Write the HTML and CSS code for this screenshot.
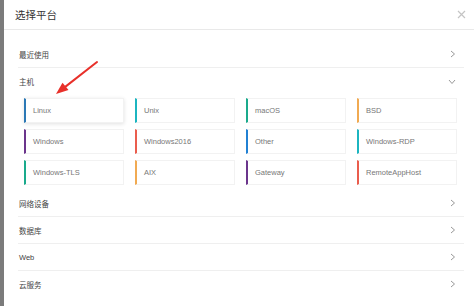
FILE: index.html
```html
<!DOCTYPE html>
<html lang="zh-CN">
<head>
  <meta charset="UTF-8" />
  <title>选择平台</title>
  <link rel="stylesheet" href="styles.css">
</head>
<body>

  <div class="modal">
    <div class="modal-header">
      <span class="modal-title">选择平台</span>
      <svg class="close" width="9" height="9" viewBox="0 0 9 9">
        <path d="M1 1 L8 8 M8 1 L1 8" stroke="#c4c4c4" stroke-width="1.2" fill="none"/>
      </svg>
    </div>

    <div class="modal-body">
      <div class="group">
        <span>最近使用</span>
        <svg class="chev" width="6" height="8" viewBox="0 0 6 8"><path d="M1 1 L4.5 4 L1 7" stroke="#999" stroke-width="1" fill="none"/></svg>
      </div>

      <div class="group open">
        <span>主机</span>
        <svg class="chev" width="8" height="6" viewBox="0 0 8 6"><path d="M1 1 L4 4.5 L7 1" stroke="#999" stroke-width="1" fill="none"/></svg>
      </div>

      <div class="platforms">
        <div class="platform hover c-blue">Linux</div>
        <div class="platform c-cyan">Unix</div>
        <div class="platform c-green">macOS</div>
        <div class="platform c-orange">BSD</div>
        <div class="platform c-purple">Windows</div>
        <div class="platform c-red">Windows2016</div>
        <div class="platform c-blue2">Other</div>
        <div class="platform c-cyan">Windows-RDP</div>
        <div class="platform c-green">Windows-TLS</div>
        <div class="platform c-orange">AIX</div>
        <div class="platform c-purple">Gateway</div>
        <div class="platform c-red">RemoteAppHost</div>
      </div>

      <div class="group">
        <span>网络设备</span>
        <svg class="chev" width="6" height="8" viewBox="0 0 6 8"><path d="M1 1 L4.5 4 L1 7" stroke="#999" stroke-width="1" fill="none"/></svg>
      </div>
      <div class="group">
        <span>数据库</span>
        <svg class="chev" width="6" height="8" viewBox="0 0 6 8"><path d="M1 1 L4.5 4 L1 7" stroke="#999" stroke-width="1" fill="none"/></svg>
      </div>
      <div class="group">
        <span>Web</span>
        <svg class="chev" width="6" height="8" viewBox="0 0 6 8"><path d="M1 1 L4.5 4 L1 7" stroke="#999" stroke-width="1" fill="none"/></svg>
      </div>
      <div class="group last">
        <span>云服务</span>
        <svg class="chev" width="6" height="8" viewBox="0 0 6 8"><path d="M1 1 L4.5 4 L1 7" stroke="#999" stroke-width="1" fill="none"/></svg>
      </div>
    </div>

    <!-- red annotation arrow -->
    <svg class="arrow" width="110" height="100" viewBox="0 0 110 100">
      <path d="M97 62 L65.5 86.6" stroke="#e8302a" stroke-width="2" fill="none" stroke-linecap="round"/>
      <polygon points="56,94 68.5,90 62.5,82.8" fill="#e8302a"/>
    </svg>
  </div>

</body>
</html>
```

FILE: styles.css
```css
body {
  margin: 0;
  background: #7b7b7b;
  font-family: 'Liberation Sans', Arial, 'Noto Sans CJK SC', sans-serif;
  color: #333;
}

.modal {
  position: relative;
  margin-left: 4px;
  height: 306px;
  background: #fff;
}

.modal-header {
  height: 29px;
  border-bottom: 1px solid #e9e9e9;
  display: flex;
  align-items: center;
  justify-content: space-between;
  padding: 0 8px 0 11px;
}

.modal-title {
  font-size: 10.5px;
  color: #333;
}

.modal-body {
  padding: 11px 10px 0 14px;
}

.group {
  height: 26px;
  border-bottom: 1px solid #efefef;
  display: flex;
  align-items: center;
  justify-content: space-between;
  padding: 0 8px 0 1px;
  font-size: 7.5px;
  color: #444;
}

.group.open,
.group.last {
  border-bottom: none;
}

.group.open {
  height: 27px;
}

.platforms {
  display: grid;
  grid-template-columns: repeat(4, 100px);
  grid-auto-rows: 25px;
  gap: 6px 11px;
  padding: 3px 0 5px 6px;
}

.platform {
  display: flex;
  align-items: center;
  padding-left: 7px;
  border: 1px solid #f2f2f2;
  border-left: 2px solid #ccc;
  font-size: 7.5px;
  color: #777;
}

.platform.hover {
  box-shadow: 0 1px 4px rgba(0, 0, 0, 0.12);
}

.c-blue { border-left-color: #2b78b5; }
.c-blue2 { border-left-color: #2181d3; }
.c-cyan { border-left-color: #1cb5c0; }
.c-green { border-left-color: #1aaa8c; }
.c-orange { border-left-color: #f1aa52; }
.c-purple { border-left-color: #6b358c; }
.c-red { border-left-color: #ea5d4d; }

.arrow {
  position: absolute;
  left: -4px;
  top: 0;
}
```
